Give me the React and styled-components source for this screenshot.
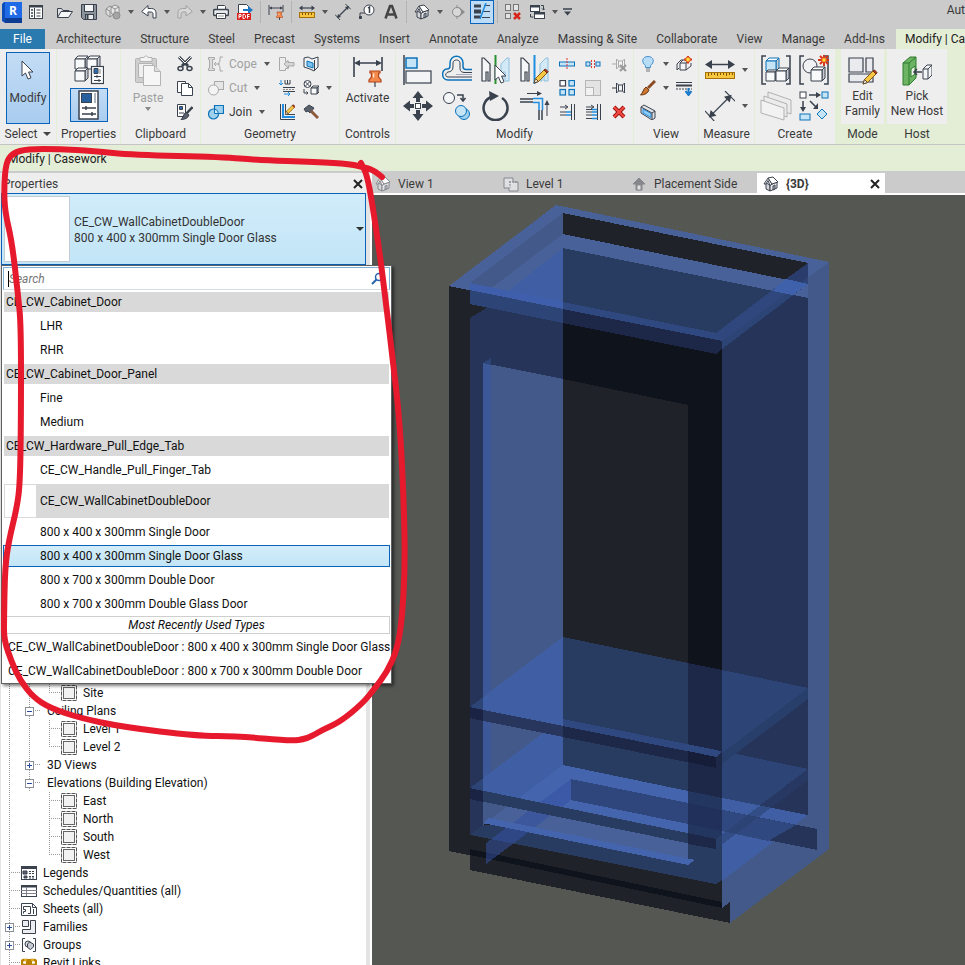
import React from 'react';
import styled, { createGlobalStyle } from 'styled-components';

const INK = '#3a424e';
const BLUE = '#0c73ba';
const SKY = '#c5e4f6';
const GREEN = '#e4eed6';
const GREY = '#cbcbcb';
const PANEL = '#eeeeee';
const SELECT = '#0a63b8';
const FAINT = '#a9a9a9';

const GlobalStyle = createGlobalStyle`
  *, *::before { box-sizing: border-box; }
  body { margin: 0; overflow: hidden; }
  body, button, input {
    font-family: Roboto, "Open Sans", sans-serif;
    font-size: 12px;
    line-height: 16px;
  }
  button {
    margin: 0;
    padding: 0;
    border: 0;
    background: none;
    color: inherit;
    text-align: left;
  }
  ul { margin: 0; padding: 0; list-style: none; }
  svg { display: block; flex: none; }
`;

/* ---------- icons ---------- */

const Icon = ({ w = 16, h = w, children }) => (
  <svg width={w} height={h} viewBox={`0 0 ${w} ${h}`} fill="none" stroke={INK} strokeWidth="1" aria-hidden="true">
    {children}
  </svg>
);

const Cube = ({ x, y, s, d = 3, fill = '#f8f9fb', line = INK }) => (
  <g stroke={line} strokeLinejoin="round">
    <path d={`M${x} ${y + d}l${d} ${-d}h${s}l${-d} ${d}z`} fill="#fff" />
    <path d={`M${x + s} ${y + d}l${d} ${-d}v${s}l${-d} ${d}z`} fill="#c9ccd2" />
    <rect x={x} y={y + d} width={s} height={s} fill={fill} />
  </g>
);

const Pencil = ({ x, y }) => (
  <g transform={`translate(${x} ${y})`} strokeLinejoin="round">
    <path d="M0 14l1.500-4.500L10 1l3 3L4.500 12.500z" fill="#f6c645" stroke="#8a5a10" />
    <path d="M10 1l1.500-1 2.500 2.500L13 4z" fill="#c0391b" stroke="#6b2a12" />
    <path d="M0 14l1.500-4.500 3 3z" fill="#f7e6cc" stroke="#5b4a35" />
  </g>
);

const Burst = ({ x, y, r = 4 }) => (
  <g transform={`translate(${x} ${y})`}>
    <path d={`M0 ${-r - 1}V${r + 1}M${-r - 1} 0H${r + 1}M${-r + 1} ${-r + 1}L${r - 1} ${r - 1}M${r - 1} ${-r + 1}L${-r + 1} ${r - 1}`} stroke="#d8341a" strokeWidth="2" />
    <circle r="2" fill="#ffe24a" stroke="#f08c1b" />
  </g>
);

const House = ({ line = INK }) => (
  <Icon>
    <g stroke={line} strokeLinejoin="round">
      <path d="M3 7v6l4 2V9z" fill="#d5d7db" />
      <path d="M7 9v6l7-3V6z" fill="#e4e6e9" />
      <path d="M1 8l4-6 4 6-2 1.500L5 4.500 3 8z" fill="#fff" />
      <path d="M5 2l5-1 5 5-6 2z" fill="#fff" />
      <path d="M10 10l2-1v4l-2 1z" fill="#b8bcc4" />
    </g>
  </Icon>
);

const HouseBlack = () => (
  <Icon>
    <path d="M8 2l6 6h-3v6H5V8H2z" fill="#85878c" stroke="#85878c" />
    <path d="M6 9h4v5H6z" fill="#e0e0e0" stroke="#8a8c90" />
  </Icon>
);

const LevelTab = () => (
  <Icon>
    <path d="M1 2h9v4h5v9H6v-3H1z" fill="#dfe0e2" stroke="#85878c" />
    <path d="M7 5v7M6 6h9" stroke="#85878c" strokeDasharray="2 1" />
  </Icon>
);

const Logo = () => (
  <Icon w={20} h={21}>
    <path d="M2 0h18v17H3z" fill="#1f6ae6" stroke="none" />
    <path d="M2 0L0 2v17l3 2V0z" fill="#0a4dbb" stroke="none" />
    <path d="M3 16h17v5H3z" fill="#0c3c94" stroke="none" />
    <text x="7" y="13" fill="#fff" stroke="none" fontSize="12" fontWeight="700" fontFamily="Open Sans, sans-serif">R</text>
  </Icon>
);

const HomePanel = () => (
  <Icon>
    <rect x="1.500" y="1.500" width="13" height="13" fill="#fff" />
    <path d="M1 2.500h14" strokeWidth="2" />
    <path d="M6.500 4v10" />
    <path d="M3 6h2M3 9h2M3 12h2" strokeWidth="1.500" />
    <path d="M8.500 6h4M8.500 9h4M8.500 12h4" />
  </Icon>
);

const Open = () => (
  <Icon>
    <path d="M.5 13V4.500h4l1.500 2h6v2" fill="#dfe1e5" />
    <path d="M.5 13.500l3.500-6h11.500l-4 6z" fill="#f6f7f9" />
  </Icon>
);

const Save = () => (
  <Icon>
    <path d="M.5.5h15v15H2.500l-2-2z" fill="#8c929b" />
    <rect x="3.500" y=".5" width="9" height="7" fill="#f4f5f7" />
    <rect x="4.500" y="10.500" width="8" height="5" fill="#e9ebed" />
    <path d="M6.500 11v4" strokeWidth="2" />
  </Icon>
);

const SyncGrey = () => (
  <Icon>
    <g stroke="#8e8e8e">
      <path d="M1 5l4-3 4 2v6l-4 3-4-3z" fill="#ddd" />
      <path d="M6 3l4-2 4 2v6l-4 3-4-3z" fill="#e6e6e6" />
      <path d="M6 3l4 2 4-2M10 5v7M1 5l4 2v6" />
      <circle cx="11.500" cy="11.500" r="3.500" fill="#a5a5a5" />
    </g>
  </Icon>
);

const Undo = ({ line = INK, fill = '#fff', flip }) => (
  <Icon>
    <path
      transform={flip ? 'matrix(-1 0 0 1 16 0)' : undefined}
      d="M.7 7.500L7 1.500v3h3.500c3 0 4.500 2 4.500 4.500v5h-3v-4c0-1.500-1-2-2-2H7v4z"
      fill={fill}
      stroke={line}
      strokeLinejoin="round"
    />
  </Icon>
);

const Print = () => (
  <Icon>
    <path d="M4.500 6V1.500h7l1 1V6" fill="#fff" />
    <rect x=".5" y="5.500" width="15" height="6" rx="1.500" fill="#e9ebee" strokeWidth="1.500" />
    <path d="M3.500 9.500h9v5h-9z" fill="#fff" />
    <path d="M5 12h6" stroke="#999" />
  </Icon>
);

const Pdf = () => (
  <Icon>
    <path d="M1.500 9V.5h8l3 3V9" fill="#fff" />
    <path d="M6 5h5V2l5 4-5 4V7H6z" fill="#1b76c4" stroke="none" />
    <rect y="9" width="14" height="7" fill="#d9201c" stroke="none" />
    <path d="M2 14.500v-4h2v2H2M6 10.500v4h1.500l1-1v-2l-1-1zM10.500 14.500v-4h2M10.500 12.500h2" stroke="#fff" />
  </Icon>
);

const PinDim = ({ big }) => (
  <Icon w={big ? 32 : 16} h={big ? 32 : 16}>
    <g transform={big ? 'scale(2)' : undefined}>
      <path d="M1 1v10M15 1v7M2 4h12" strokeWidth={big ? 0.8 : 1} />
      <path d="M1 4l3-1.500v3zM15 4l-3-1.500v3z" fill={INK} stroke="none" />
      <path d="M9 8h5v1h-.7v2l1.200 1.500v1h-6v-1L9.700 11V9H9z" fill="#f2884a" stroke="#b3431b" strokeWidth=".6" />
      <path d="M10.800 9.200v2" stroke="#ffe0cc" strokeWidth=".7" />
      <path d="M11.500 13.500V16" strokeWidth={big ? 0.6 : 1} />
    </g>
  </Icon>
);

const Ruler = ({ big }) => (big ? (
  <Icon w={30} h={20}>
    <path d="M3 4.500h24" strokeWidth="1.500" />
    <path d="M0 4.500L7 0v9zM30 4.500L23 0v9z" fill={INK} stroke="none" />
    <rect x=".5" y="12.500" width="29" height="6" fill="#f7c63e" stroke="#a3700a" />
    <path d="M3.500 13v3M6.500 13v2M9.500 13v2M12.500 13v3M15.500 13v2M18.500 13v2M21.500 13v3M24.500 13v2M27.500 13v2" stroke="#7d5507" />
  </Icon>
) : (
  <Icon>
    <path d="M1 4h14" strokeWidth="1.200" />
    <path d="M0 4l3.500-2.500v5zM16 4l-3.500-2.500v5z" fill={INK} stroke="none" />
    <rect x=".5" y="8.500" width="15" height="5" fill="#f7c63e" stroke="#a3700a" />
    <path d="M3.500 9v2M6.500 9v2M9.500 9v2M12.500 9v2" stroke="#7d5507" />
  </Icon>
));

const Aligned = ({ big }) => (
  <Icon w={big ? 30 : 16} h={big ? 30 : 16}>
    <g transform={big ? 'scale(1.900)' : undefined}>
      <path d="M2.500 13.500l11-11" strokeWidth={big ? 0.7 : 1.200} />
      <path d="M0 10.500L5 16M10.500 0L16 5.500" strokeWidth={big ? 0.6 : 1} />
      <path d="M2 14l1-4 3 3zM14 2l-1 4-3-3z" fill={INK} stroke="none" />
    </g>
  </Icon>
);

const Tag = () => (
  <Icon>
    <path d="M1 15V9h5" />
    <path d="M.5 12.500h2v2h-2z" fill={INK} />
    <circle cx="10" cy="6" r="5" fill="#fff" />
    <path d="M9 4l1.500-1v6" strokeWidth="1.500" />
  </Icon>
);

const LetterA = () => (
  <Icon>
    <path d="M2.500 14.500L7 2h2l4.500 12.500M5 10.500h6" stroke="#444" strokeWidth="2.500" />
  </Icon>
);

const Section = () => (
  <Icon>
    <circle cx="7" cy="8" r="4.500" fill="#d8d8d8" stroke="#8c8c8c" />
    <path d="M7 3l2 0 6 5-6 5H7c3-1 4-2 4-5s-1-4-4-5z" fill="#8c8c8c" stroke="none" />
    <path d="M7 1v2M7 13v2" stroke="#8c8c8c" />
  </Icon>
);

const ThinLines = () => (
  <Icon w={18}>
    <path d="M1 3h7M1 14h7" strokeWidth="3" />
    <path d="M1 8.500h7" strokeWidth="4" />
    <path d="M11 2.500h6M10 8.500h7M9 14.500h8" />
    <path d="M13 0L7 16" stroke="#1f8de0" strokeWidth="1.500" />
  </Icon>
);

const CloseWindows = () => (
  <Icon>
    <g stroke="#777">
      <rect x=".5" y=".5" width="5" height="6" fill="#e4e4e4" />
      <rect x="8.500" y=".5" width="5" height="6" fill="#e4e4e4" />
      <rect x=".5" y="9.500" width="5" height="5" fill="#e4e4e4" />
    </g>
    <path d="M9 9l6 6M15 9l-6 6" stroke="#d6261c" strokeWidth="2.500" />
  </Icon>
);

const SwitchWindows = () => (
  <Icon>
    <rect x="1.500" y="1.500" width="9" height="6" fill="#fff" />
    <path d="M1 2.500h10" strokeWidth="2" />
    <rect x="5.500" y="8.500" width="10" height="6" fill="#fff" />
    <path d="M5 9.500h11" strokeWidth="2" />
    <path d="M12 1.500h2.500V6M13 4.500L14.500 6 16 4.500M1.500 10v3h3" />
  </Icon>
);

const Customize = () => (
  <Icon w={9} h={8}>
    <path d="M0 1h9" strokeWidth="1.500" />
    <path d="M1 3.500h7L4.500 7.500z" fill={INK} stroke="none" />
  </Icon>
);

const Cursor = ({ x = 0, y = 0 }) => (
  <g transform={`translate(${x} ${y})`}>
    <path d="M1 1v15l3.500-3 2.500 6 3-1.200-2.500-5.800H12z" fill="#fff" stroke={INK} strokeLinejoin="round" />
  </g>
);

const ModifyArrow = () => (
  <Icon w={14} h={22}><Cursor /></Icon>
);

const TypeProps = () => (
  <Icon w={30} h={30}>
    <Cube x={1} y={1} s={10} />
    <Cube x={13} y={1} s={10} />
    <Cube x={1} y={13} s={10} />
    <rect x="17.500" y="11.500" width="12" height="17" fill="#fff" strokeWidth="1.200" />
    <path d="M20 13.500h4v5h-4z" fill="#2f6db0" />
    <path d="M26 14v5" stroke="#aaa" strokeWidth="1.500" />
    <path d="M20 21.500h7M20 25.500h7M23 20v3M25 24v3" />
  </Icon>
);

const PropsSheet = () => (
  <Icon w={22} h={30}>
    <rect x="1" y="1" width="19" height="28" fill="#fff" strokeWidth="1.500" />
    <rect x="3.500" y="3.500" width="10" height="9" fill="#285f9e" />
    <path d="M17 3v10" stroke="#aeb4bc" strokeWidth="2" />
    <path d="M4 18h14M4 24h14M8 16v4M14 22v4" strokeWidth="1.500" />
  </Icon>
);

const Paste = () => (
  <Icon w={28} h={32}>
    <g stroke="#b3b3b3">
      <rect x="1.500" y="3.500" width="21" height="24" rx="1" fill="#cfcfcf" />
      <path d="M6 2.500h4c0-2 4-2 4 0h4v4H6z" fill="#f3f3f3" />
      <path d="M4.500 8.500h14v14h-14z" fill="#efefef" />
      <path d="M9.500 10.500h11l6 6v14h-17z" fill="#f6f6f6" />
      <path d="M20.500 10.500v6h6" fill="#ddd" />
    </g>
  </Icon>
);

const CutScissors = () => (
  <Icon>
    <path d="M2 1l9 9M14 1L5 10" strokeWidth="3" />
    <path d="M2 1l6 6M14 1L8 7" stroke="#fff" />
    <ellipse cx="3.500" cy="12.500" rx="2.500" ry="2" strokeWidth="1.500" />
    <ellipse cx="12.500" cy="12.500" rx="2.500" ry="2" strokeWidth="1.500" />
  </Icon>
);

const Copy = () => (
  <Icon>
    <path d="M.5 1.500h8v11h-8z" fill="#fff" />
    <path d="M4.500 3.500h7l4 4v8h-11z" fill="#fff" />
    <path d="M11.500 3.500v4h4" />
  </Icon>
);

const MatchType = () => (
  <Icon>
    <path d="M.5.500h8v12h-8z" fill="#fff" />
    <path d="M2.500 2.500h3v3h-3z" fill="#2f6db0" />
    <path d="M2 9h5" />
    <path d="M15.500 3L9 10" strokeWidth="2.500" />
    <path d="M9 8l3 3c-1 3-4 4.500-8 4.500 2-1 2-5 5-7.500z" fill="#59606b" />
  </Icon>
);

const Cope = () => (
  <Icon>
    <g stroke={FAINT}>
      <path d="M.5 1.500h6v2h-2v9h2v2h-6v-2h1v-9h-1z" fill="#ddd" />
      <path d="M15 1h-3v4l-2 3 2 3v4h3M6 8h6M8 6L6 8l2 2" />
    </g>
  </Icon>
);

const CutGeo = () => (
  <Icon>
    <g stroke={FAINT} fill="#e6e6e6">
      <rect x="6.500" y="1.500" width="9" height="8" />
      <circle cx="5.500" cy="10" r="5" fill="#f4f4f4" />
    </g>
  </Icon>
);

const JoinGeo = () => (
  <Icon>
    <g stroke={BLUE}>
      <path d="M6.500 1.500h9v8h-5a5 5 0 1 1-5-4.500h1z" fill="#9fd0ee" strokeWidth="1.200" />
      <path d="M6.500 5a5 5 0 0 1 4 4.500h-4z" fill="#d4ecf9" />
    </g>
  </Icon>
);

const WallJoin = () => (
  <Icon>
    <g stroke={FAINT}>
      <path d="M.5 1.500h6v4h3v7h-3v2h-6z" fill="#ededed" />
      <path d="M5 8l4-3.500V6.500h6v3.500H9v2z" fill="#d6d6d6" />
    </g>
  </Icon>
);

const SplitFace = () => (
  <Icon>
    <path d="M1 2l4-1 4 2 6-2v10l-4 4-4-2-6-2z" fill="#f1f2f4" />
    <path d="M4 5l6 2v5l-6-2z" fill="#7bc0ee" stroke={BLUE} />
    <path d="M11.500 4v11" />
  </Icon>
);

const BeamJoin = () => (
  <Icon>
    <path d="M2 0v5M0 3l2 2 2-2M5 14h6M9 12l2 2-2 2" stroke="#1f8de0" />
    <path d="M6 0v4h5V0M8.500 0v4M4 7.500h12M4 11.500h12" />
    <path d="M4 9.500h12" stroke="#888" strokeDasharray="2 1" />
  </Icon>
);

const PaintBucket = () => (
  <Icon>
    <circle cx="4.500" cy="4" r="3.500" fill="#fff" />
    <path d="M2 1.500l5 5M7 1.500l-5 5M1 9v4h4M3.500 11.500L5 13l-1.500 1.500" />
    <Cube x={8} y={6} s={6} d={2} />
  </Icon>
);

const WallEdit = () => (
  <Icon>
    <path d="M1.500 0v15.500H16M6.500 0v10.500H16" />
    <path d="M4 0v13h12" stroke="#1f8de0" strokeWidth="2" />
    <g transform="scale(.7)"><Pencil x={9} y={1} /></g>
  </Icon>
);

const Hammer = () => (
  <Icon>
    <path d="M1 5l5-4 5 3-4 5-2-2-2 1z" fill="#59606b" />
    <path d="M8 7l7 7" stroke="#8e5a3c" strokeWidth="3" />
  </Icon>
);

const AlignIcon = () => (
  <Icon w={30} h={30}>
    <path d="M1 0v30" strokeWidth="1.500" />
    <rect x="3" y="3" width="11" height="10" fill={SKY} stroke={BLUE} strokeWidth="1.500" />
    <rect x="3" y="16" width="25" height="12" fill="#f3f4f6" strokeWidth="1.200" />
  </Icon>
);

const OffsetIcon = () => (
  <Icon w={30} h={30}>
    <path d="M30 14.500h-6c-2 0-3-1-3-3V8c0-9-13-9-13 0v3c0 2-1 3-3 3-6 0-6 11 1 11h24" stroke={BLUE} strokeWidth="1.500" />
    <path d="M30 17.500h-7c-3 0-5-1-5-4V8c0-4-7-4-7 0v4c0 3-2 5-5 5-3 1-3 5 0 5h24" />
    <path d="M30 19.500H14" stroke="#aab" />
  </Icon>
);

const Mirror = ({ pick }) => (
  <Icon w={30} h={30}>
    <path d="M1 3h2l6 6v17H7v-9H5v9H1z" fill="#f5f6f8" strokeWidth="1.200" />
    <path d="M28 3h-2l-6 6v17h2v-9h2v9h4z" fill="#d3e9f6" stroke="#8dc0de" />
    <path d="M14.500 0v29" stroke={pick ? '#2a9130' : '#1f8de0'} strokeWidth="2" />
    {pick ? <Cursor x={13} y={9} /> : <Pencil x={14} y={14} />}
  </Icon>
);

const Move = () => (
  <Icon w={30} h={30}>
    <path d="M15 0l5.500 7H17v4h-4V7H9.500zM15 30l5.500-7H17v-4h-4v4H9.500zM0 15l7-5.500V13h4v4H7v3.500zM30 15l-7-5.500V13h-4v4h4v3.500z" fill={INK} stroke="none" />
    <rect x="12.500" y="12.500" width="5" height="5" fill="#fff" />
  </Icon>
);

const CopyMod = () => (
  <Icon w={30} h={30}>
    <circle cx="7" cy="7" r="5.500" fill="#f5f6f8" />
    <circle cx="22" cy="23" r="5.500" fill="#9fd0ee" stroke={BLUE} />
    <circle cx="19" cy="20" r="5.500" fill={SKY} stroke={BLUE} />
    <path d="M15 4h6v5M18.500 7l2.500 3 2.500-3" strokeWidth="1.500" />
  </Icon>
);

const Rotate = () => (
  <Icon w={30} h={30}>
    <path d="M10 6a12 12 0 1 0 11 1" strokeWidth="2.500" />
    <path d="M8 0l10 5-9 5z" fill={INK} stroke="none" />
  </Icon>
);

const Trim = () => (
  <Icon w={30} h={30}>
    <path d="M0 8h13M0 11h13M22 19v10M19 19v10" strokeWidth="1.500" />
    <path d="M13 7.500h9.500V19M13 11.500h6V19" stroke="#1f8de0" strokeWidth="1.500" />
    <path d="M7 2.500h12M27 25V13" />
    <path d="M17 0l5 2.500-5 2.500zM24.500 14l2.500-5 2.500 5z" fill={INK} stroke="none" />
  </Icon>
);

const SplitEl = ({ gap }) => (
  <Icon>
    <g stroke={BLUE} fill={SKY}>
      {gap ? <><rect x="1" y="6" width="4" height="4" /><rect x="11" y="6" width="4" height="4" /></> : <rect x=".5" y="6" width="15" height="4" />}
    </g>
    <path d={gap ? 'M6.500 4v9M9.500 4v9' : 'M8 2v12'} stroke="#d33" strokeDasharray="2 1" />
  </Icon>
);

const ArrayIcon = () => (
  <Icon>
    <rect x="1" y=".5" width="5.500" height="5.500" fill="#fff" strokeWidth="1.200" />
    <g stroke={BLUE} fill={SKY} strokeWidth="1.200">
      <rect x="10" y=".5" width="5.500" height="5.500" />
      <rect x="1" y="9.500" width="5.500" height="5.500" />
      <rect x="10" y="9.500" width="5.500" height="5.500" />
    </g>
  </Icon>
);

const Scale = () => (
  <Icon>
    <g stroke="#b5b5b5" fill="#e3e3e3">
      <rect x=".5" y=".5" width="15" height="15" />
      <rect x=".5" y="7.500" width="8" height="8" fill="#f2f2f2" />
    </g>
  </Icon>
);

const TrimOne = ({ multi }) => (
  <Icon>
    <path d="M12.500 0v16M15.500 0v16M1 3h7M6 1l3 2-3 2" />
    <path d="M1 8h6M1 11h6" />
    <path d="M7 8h5M7 11h5" stroke="#1f8de0" strokeWidth="1.500" />
    {multi && <><path d="M1 14.500h6M1 5.500h6" /><path d="M7 14.500h5M7 5.500h5" stroke="#1f8de0" strokeWidth="1.500" /></>}
  </Icon>
);

const PinIcon = ({ off }) => (
  <Icon>
    <g stroke={off ? FAINT : INK} fill="#f3f3f3">
      <path d="M1 8h5" />
      <path d="M5.500 3v10l2-2h4l2 2V3l-2 2h-4zM7.500 5v6M11.500 5v6" />
    </g>
    {off && <path d="M9 9l6 6M15 9l-6 6" stroke="#999" strokeWidth="2" />}
  </Icon>
);

const Delete = () => (
  <Icon>
    <path d="M3 3l10 10M13 3L3 13" stroke="#a01610" strokeWidth="4" />
    <path d="M3 3l10 10M13 3L3 13" stroke="#f24a43" strokeWidth="2" />
  </Icon>
);

const Bulb = () => (
  <Icon>
    <path d="M8 .5c6 0 7 6 2.500 9v2h-5v-2C1 6.500 2 .5 8 .5z" fill="#b7dcf6" stroke="#4a90cc" />
    <path d="M6 13h4M6 15h4" stroke="#777" />
  </Icon>
);

const Override = () => (
  <Icon>
    <path d="M1 8l4-4h6M1 8v6l2-2M4 7h6v7H4zM4 7l3-3M10 7l3-2M10 14l5-4V7" fill="#f3f3f3" />
    <Burst x={12} y={3.5} r={3} />
  </Icon>
);

const Brush = () => (
  <Icon>
    <path d="M15 1L8 8" stroke="#8a4b22" strokeWidth="3" />
    <path d="M6 7l3 3c-1 3-4 5-8.500 5C3 13 3 9 6 7z" fill="#c9752f" stroke="#6f3c17" />
  </Icon>
);

const Linework = () => (
  <Icon>
    <path d="M0 2.500h16" />
    <path d="M0 5.500h16" strokeWidth="2" />
    <path d="M0 9h16" strokeDasharray="2 1" />
    <path d="M12.500 8v5M9.500 11l3 4 3-4" stroke="#1577c9" strokeWidth="2" />
  </Icon>
);

const SelectBox = () => (
  <Icon>
    <path d="M1 3l3-2 11 6v7l-3 2L1 9z" fill="#dfe3e8" />
    <path d="M3 5l8 4.500v4L3 9z" fill="#8fcbf3" stroke="#1f8de0" />
    <path d="M12 16V9L1 3M12 9l3-2" />
  </Icon>
);

const Brackets = ({ children }) => (
  <Icon w={30} h={30}>
    <path d="M5 1H1v28h4M25 1h4v28h-4" strokeWidth="1.500" />
    {children}
  </Icon>
);

const CreateGroup = () => (
  <Brackets>
    <Cube x={5} y={3} s={10} fill={SKY} line={BLUE} />
    <Cube x={5} y={15} s={9} d={2} />
    <Cube x={15} y={13} s={10} />
  </Brackets>
);

const CreateSimilar = () => (
  <Brackets>
    <circle cx="11" cy="11" r="7" fill="#f0f1f3" />
    <Cube x={12} y={12} s={11} />
    <Burst x={25} y={5} r={5} />
  </Brackets>
);

const Assembly = () => (
  <Icon w={32} h={30}>
    <g fill="#ececec" stroke="#b1b1b1" strokeLinejoin="round">
      <path d="M8 1l23 8v14L8 15z" />
      <path d="M4 5l23 8v13L4 19z" />
      <path d="M1 9l23 8v12L1 22z" fill="#f2f2f2" />
    </g>
  </Icon>
);

const Parts = () => (
  <Icon w={30} h={30}>
    <rect x="1" y="1" width="6" height="6" fill="#fff" />
    <path d="M10 4h9M4 10v9M11 10l7 7" strokeWidth="1.500" />
    <path d="M17 1l5 3-5 3zM1 16h6l-3 5zM14 18h5v-6z" fill={INK} stroke="none" />
    <g fill={SKY} stroke={BLUE}>
      <rect x="23" y="1" width="6" height="6" />
      <rect x="1" y="23" width="10" height="6" />
      <path d="M23 18l5 5-5 5-5-5z" />
    </g>
  </Icon>
);

const EditFamily = () => (
  <Icon w={30} h={30}>
    <path d="M1 2h14v14H1zM18 2h7v14h-7zM1 18h24v8H1z" fill="#e9ebee" strokeWidth="1.200" />
    <Pencil x={15} y={14} />
  </Icon>
);

const PickHost = () => (
  <Icon w={30} h={30}>
    <path d="M1 7l7-6h6v21l-7 7H1z" fill="#6cb463" stroke="#2f7d2f" />
    <path d="M1 7h6l7-6M7 7v22" stroke="#2f7d2f" />
    <path d="M9 13l4-3v8l-4 3z" fill="#eef4ea" stroke="#2f7d2f" />
    <path d="M12 16h8M15 13l-3 3 3 3" strokeWidth="1.500" />
    <path d="M21 13l4-4h5v10l-4 4h-5z" fill="#f3f4f6" />
    <path d="M21 13h5l4-4M26 13v10" />
  </Icon>
);

const Magnifier = () => (
  <Icon w={14}>
    <circle cx="9" cy="5" r="3.500" stroke="#2a63ae" strokeWidth="1.500" />
    <path d="M6.500 7.500L2 12" stroke="#2a63ae" strokeWidth="2" />
  </Icon>
);

const ViewMark = () => (
  <Icon>
    <rect x=".5" y=".5" width="15" height="15" stroke="#555" strokeDasharray="4 1" />
    <rect x="2.500" y="2.500" width="11" height="11" fill="#f2f2f2" stroke="#666" />
  </Icon>
);

const LegendMark = () => (
  <Icon>
    <rect x=".5" y="1.500" width="15" height="13" fill="#fff" />
    <path d="M0 2.500h16" strokeWidth="3" />
    <path d="M2 6h4v3H2zM3 11h3v2H3z" fill="#59606b" />
    <path d="M8 6.500h6M8 8.500h6M8 11.500h6M8 13h6" strokeDasharray="2 1" />
  </Icon>
);

const ScheduleMark = () => (
  <Icon>
    <rect x=".5" y="2.500" width="15" height="11" fill="#fff" />
    <path d="M0 3.500h16" strokeWidth="2" />
    <path d="M5.500 4v9M0 7.500h16M0 10.500h16" stroke="#7b828c" />
  </Icon>
);

const SheetMark = () => (
  <Icon>
    <path d="M.5 2.500h11l4 4v8H.5z" fill="#fff" />
    <path d="M11.500 2.500v4h4M2.500 12.500v-2h2v-2h-2v-3h7v7H7M12.500 8v5" />
  </Icon>
);

const FamilyMark = () => (
  <Icon>
    <path d="M1.500 1.500h6v6h-6z" fill="#eceef1" />
    <path d="M9.500 1.500h5v13h-13v-4h8z" fill="#eceef1" />
  </Icon>
);

const GroupMark = () => (
  <Icon>
    <path d="M4 1.500H1.500v13H4M12 1.500h2.500v13H12" />
    <circle cx="7" cy="7" r="3" fill="#d9dce0" />
    <path d="M6.500 7l2-2 4 2v3l-3 2.500-3-2z" fill="#c5cad2" />
  </Icon>
);

const LinkMark = () => (
  <Icon>
    <path d="M2 5h4c3 0 3 5 0 5H3c-3 0-3-5 0-5zM10 5h3c3 0 3 5 0 5h-3c-3 0-3-5 0-5zM5 7.500h6" stroke="#b98000" strokeWidth="2.500" />
    <path d="M3 5h3M10 5h3" stroke="#ffcf3a" />
  </Icon>
);

const Cross = () => (
  <Icon w={10}>
    <path d="M1 1l8 8M9 1L1 9" strokeWidth="2" stroke="#222" />
  </Icon>
);

const Caret = ({ color = '#555', w = 6 }) => (
  <Icon w={w} h={4}><path d={`M0 0h${w}L${w / 2} 4z`} fill={color} stroke="none" /></Icon>
);

/* ---------- window shell ---------- */

const Window = styled.div`
  display: flex;
  flex-direction: column;
  position: relative;
  height: 100vh;
  overflow: hidden;
  background: ${PANEL};
  color: #3a3a3a;
`;

const QuickAccess = styled.header`
  display: flex;
  align-items: flex-start;
  height: 29px;
  flex: none;
  background: ${GREY};
`;

const QuickButton = styled.button`
  display: flex;
  align-items: center;
  justify-content: center;
  width: 24px;
  height: 24px;
  flex: none;
  margin-right: ${p => (p.$gap ? 5 : 0)}px;
  border: ${p => (p.$on ? `1px solid ${SELECT}` : 0)};
  background: ${p => (p.$on ? '#bcdcf7' : 'none')};
`;

const Drop = styled.button`
  display: flex;
  align-items: center;
  justify-content: center;
  width: 12px;
  height: 24px;
  flex: none;
`;

const Divider = styled.span`
  width: 1px;
  height: 22px;
  margin: 1px 3px;
  background: #b3b3b3;
`;

const Title = styled.span`
  margin-left: auto;
  padding-top: 2px;
  white-space: nowrap;
`;

const Tabs = styled.nav`
  display: flex;
  height: 20px;
  flex: none;
  background: ${GREY};
`;

const TabGroup = styled.div`
  display: flex;
  flex: 1;
  justify-content: space-between;
  padding: 0 11px;
`;

const Tab = styled.button`
  white-space: nowrap;
`;

const FileTab = styled.button`
  width: 45px;
  background: #2a7ab0;
  color: #fff;
  text-align: center;
`;

const ContextTab = styled.button`
  width: 69px;
  padding-left: 9px;
  background: ${GREEN};
  color: #222;
  white-space: nowrap;
`;

const Ribbon = styled.div`
  display: flex;
  height: 95px;
  flex: none;
  background: ${GREEN};
`;

const Panel = styled.section`
  display: flex;
  flex-direction: column;
  width: ${p => p.$w}px;
  flex: none;
  margin-left: ${p => p.$gap || 0}px;
  border-right: 1px solid ${GREEN};
  background: ${PANEL};
`;

const PanelBody = styled.div`
  display: flex;
  justify-content: ${p => (p.$center ? 'center' : 'flex-start')};
  height: 75px;
  padding: 3px 2px 0;
`;

const PanelLabel = styled.div`
  display: flex;
  align-items: center;
  justify-content: center;
  gap: 6px;
  height: 20px;
  background: ${p => (p.$green ? GREEN : 'none')};
`;

const BigButton = styled.button`
  display: flex;
  flex-direction: column;
  align-items: center;
  width: ${p => p.$w}px;
  height: 72px;
  color: ${p => (p.$off ? '#a0a0a0' : 'inherit')};
  border: 1px solid ${p => (p.$on ? SELECT : 'transparent')};
  background: ${p => (p.$on ? 'linear-gradient(#c3dcf5, #a9cdf0)' : 'none')};
`;

const BigIcon = styled.span`
  display: flex;
  align-items: center;
  height: 36px;
  flex: none;
`;

const BigText = styled.span`
  line-height: ${p => (p.$two ? 15 : 18)}px;
  text-align: center;
  white-space: nowrap;
`;

const BigGrid = styled.div`
  display: grid;
  grid-template-columns: repeat(${p => p.$cols}, ${p => p.$size}px);
  grid-template-rows: 36px 36px;
`;

const SmallGrid = styled.div`
  display: grid;
  grid-template-columns: repeat(${p => p.$cols}, ${p => p.$size || 24}px);
  grid-template-rows: repeat(3, 24px);
`;

const Cell = styled.button`
  display: flex;
  align-items: center;
  justify-content: center;
`;

const Framed = styled(Cell)`
  width: 38px;
  height: 34px;
  justify-self: center;
  border: 1px solid ${SELECT};
  background: linear-gradient(#c3dcf5, #a9cdf0);
`;

const TextButtons = styled.div`
  display: grid;
  grid-template-rows: repeat(3, 24px);
  width: 72px;
`;

const TextButton = styled.button`
  display: flex;
  align-items: center;
  gap: 5px;
  padding-left: 5px;
  color: ${p => (p.$off ? '#a0a0a0' : 'inherit')};
  svg:last-child { margin-left: 2px; }
`;

const DropColumn = styled.div`
  display: grid;
  grid-auto-rows: ${p => p.$row}px;
  align-content: start;
  width: 12px;
`;

const OptionsBar = styled.div`
  height: 27px;
  flex: none;
  padding: 6px 8px 0;
  border-top: 1px solid #c4c4c4;
  background: ${GREEN};
  color: #222;
`;

const Workspace = styled.main`
  display: flex;
  flex: 1;
  min-height: 0;
`;

/* ---------- left dock ---------- */

const Dock = styled.aside`
  display: flex;
  flex-direction: column;
  width: 372px;
  flex: none;
  border-top: 2px solid ${GREY};
  border-right: 2px solid #fff;
  padding: 0 4px 0 1px;
  background: #e4e4e4;
`;

const DockTitle = styled.div`
  display: flex;
  align-items: center;
  justify-content: space-between;
  height: 20px;
  flex: none;
  padding: 1px 3px 0 2px;
  background: ${PANEL};
`;

const TypeSelector = styled.div`
  position: relative;
  flex: none;
  color: #333;
`;

const TypeButton = styled.button`
  display: flex;
  align-items: center;
  width: 100%;
  height: 72px;
  padding: 0 1px 0 2px;
  border: 1px solid ${SELECT};
  background: linear-gradient(#d1ecfa, #c2e5f7);
`;

const Thumb = styled.span`
  width: 66px;
  height: 66px;
  border: 1px solid #c4ccd2;
  background: #fff;
`;

const TypeName = styled.span`
  flex: 1;
  padding: 2px 0 0 4px;
`;

const Popup = styled.div`
  position: absolute;
  top: 100%;
  left: 0;
  z-index: 2;
  width: 391px;
  padding: 1px;
  border: 1px solid #5d5f61;
  background: #fff;
  color: #111;
  box-shadow: 2px 2px 3px rgba(0, 0, 0, 0.5);
`;

const SearchBox = styled.div`
  display: flex;
  align-items: center;
  justify-content: space-between;
  height: 23px;
  margin-bottom: 2px;
  padding: 0 5px 0 4px;
  border: 1px solid #7fb0d6;
  border-bottom-color: #d5dde3;
`;

const SearchInput = styled.input`
  flex: 1;
  height: 16px;
  padding: 0;
  border: 0;
  border-left: 1px solid #000;
  outline: none;
  font-style: italic;
  &::placeholder { color: #777; opacity: 1; }
`;

const FamilyRow = styled.li`
  height: 20px;
  margin: 2px 1px;
  padding: 2px 2px;
  background: #d9d9d9;
`;

const BigFamilyRow = styled.li`
  display: flex;
  align-items: center;
  height: 34px;
  margin: 2px 1px;
  background: #d9d9d9;
  &::before {
    content: '';
    width: 33px;
    height: 34px;
    margin-right: 3px;
    border: 1px solid #d9d9d9;
    background: #fff;
  }
`;

const TypeRow = styled.button`
  display: block;
  width: 100%;
  height: ${p => (p.$on ? 22 : 24)}px;
  margin: ${p => (p.$on ? '1px 0' : 0)};
  padding: 0 0 0 ${p => (p.$on ? 36 : 37)}px;
  border: ${p => (p.$on ? `1px solid ${SELECT}` : 0)};
  background: ${p => (p.$on ? 'linear-gradient(#d3edfa, #c3e5f6)' : 'none')};
`;

const RecentTitle = styled.div`
  height: 18px;
  border: 1px solid #cfcfcf;
  font-style: italic;
  text-align: center;
`;

const RecentRow = styled.button`
  display: block;
  width: 100%;
  height: 24px;
  padding: 2px 0 0 5px;
  white-space: nowrap;
`;

const PropertyArea = styled.div`
  height: 419px;
  flex: none;
  background: #fff;
`;

const Tree = styled.ul`
  flex: 1;
  min-height: 0;
  overflow: hidden;
  background: #fff;
  color: #111;
`;

const TreeRow = styled.li`
  display: flex;
  align-items: center;
  height: 18px;
  white-space: nowrap;
`;

const dots = {
  line: 'linear-gradient(#999 50%, transparent 50%) 0 0 / 1px 2px repeat-y',
  across: 'linear-gradient(90deg, #999 50%, transparent 50%) 0 8px / 2px 1px repeat-x',
};

const Guide = styled.span`
  display: flex;
  align-items: center;
  width: 20px;
  height: 18px;
  flex: none;
  padding: 0 0 ${p => (p.$kind === 'end' ? 9 : 0)}px 8px;
  background: ${p => ({
    none: 'none',
    line: dots.line,
    tee: `${dots.line}, ${dots.across}`,
    end: `${dots.line}, ${dots.across}`,
  }[p.$kind])};
  background-origin: content-box;
  background-clip: content-box;
`;

const Expander = styled.button`
  width: 9px;
  height: 9px;
  flex: none;
  margin-left: -4px;
  border: 1px solid #8a8f98;
  background:
    linear-gradient(#2a4a9a, #2a4a9a) center / 5px 1px no-repeat,
    linear-gradient(#2a4a9a, #2a4a9a) center / ${p => (p.$open ? 0 : 1)}px 5px no-repeat,
    #fff;
`;

const TreeText = styled.span`
  padding-left: 6px;
`;

/* ---------- drawing area ---------- */

const Views = styled.section`
  display: flex;
  flex-direction: column;
  flex: 1;
  min-width: 0;
`;

const ViewTabs = styled.div`
  display: flex;
  height: 24px;
  flex: none;
  padding: 2px 0 0 1px;
  border-bottom: 2px solid #fff;
  background: ${GREY};
`;

const ViewTab = styled.button`
  display: flex;
  align-items: center;
  gap: 7px;
  width: 128px;
  padding: 1px 5px 0 ${p => (p.$on ? 6 : 2)}px;
  background: ${p => (p.$on ? '#fff' : 'none')};
  font-weight: ${p => (p.$on ? 700 : 400)};
  svg:last-child:not(:first-child) { margin-left: auto; }
`;

const Canvas = styled.div`
  flex: 1;
  min-height: 0;
  padding: 10px 0 0 77px;
  background: #555753;
`;

const Markup = styled.svg`
  position: absolute;
  top: 140px;
  left: 0;
  z-index: 3;
  pointer-events: none;
`;

/* each face: corner points, fill */
const shelf = f => [
  [`470,${f} 563,${f - 70} 563,${f + 19}`, '#2d4477'],
  [`483,${f - 10} 563,${f - 70} 563,${f + 19} 483,${f + 3}`, '#3f5ea3'],
  [`563,${f - 70} 688,${f - 44} 688,${f + 44} 563,${f + 19}`, '#283c62'],
  [`688,${f - 44} 722,${f - 37} 722,${f + 46} 716,${f + 50} 688,${f + 44}`, '#1d2848'],
  [`722,${f - 37} 808,${f - 19} 722,${f + 46}`, '#2d4477'],
];

const shelfEdge = f => [
  [`470,${f} 483,${f + 3} 483,${f + 14} 470,${f + 11}`, '#1a2343'],
  [`483,${f + 3} 563,${f + 19} 563,${f + 30} 483,${f + 14}`, '#28365d'],
  [`563,${f + 19} 716,${f + 50} 716,${f + 61} 563,${f + 30}`, '#1d2848'],
  [`688,${f + 44} 716,${f + 50} 716,${f + 61} 688,${f + 55}`, '#151d38'],
  [`716,${f + 50} 722,${f + 46} 722,${f + 57} 716,${f + 61}`, '#1d2848'],
  [`722,${f + 46} 808,${f - 19} 808,${f - 8} 722,${f + 57}`, '#283e6b'],
];

const faces = [
  // outer shell
  ['449,286 722,341 722,908 449,851', '#1f2229'],
  ['470,849 730,902 730,923 470,870', '#1f2229'],
  ['470,849 722,902 722,908 470,855', '#0f131b'],
  ['722,341 829,262 829,849 730,923 730,902 722,908', '#43598a'],
  ['449,286 556,205 829,262 722,341', '#486198'],
  // walls behind the door
  ['470,318 504,297 563,309 563,765 470,835', '#27345a'],
  ['563,309 722,341 722,798 563,765', '#0f131b'],
  ['722,341 808,284 808,815 722,881', '#27345a'],
  // top panel
  ['563,213 808,263 808,284 563,234', '#1f2229'],
  ['470,283 563,213 563,234 470,304', '#43598a'],
  ['502,296 563,248 563,309', '#3f5ea3'],
  ['563,248 808,298 722,341 563,309', '#283c62'],
  ['722,341 808,284 808,360 722,420', '#27345a'],
  ['563,234 808,284 808,298 563,248', '#486198'],
  ['470,290 563,309 563,323 470,304', '#2d4477'],
  ['563,309 722,341 716,354 563,323', '#1d2848'],
  ['470,283 563,302 563,309 470,290', '#3f5eab'],
  ['563,302 716,333 722,341 563,309', '#304880'],
  ['716,333 808,263 808,284 722,349 722,341', '#2f477d'],
  ['786,279 808,263 808,284', '#2a3c6b'],
  ['722,341 808,277 808,284 722,349', '#2d4477'],
  ['772,291 786,279 808,284 793,295', '#3f60ab'],
  ['716,354 722,341 722,349', '#1d2848'],
  // glass
  ['483,363 563,379 563,765 483,825', '#43598a'],
  ['483,363 491,365 491,819 483,825', '#3c5899'],
  ['483,363 491,358 491,365', '#2d4477'],
  ['563,379 688,405 688,791 563,765', '#1f2229'],
  // shelves
  ...shelf(707),
  ...shelf(788),
  ['563,719 716,750 722,752 716,757 563,726', '#304880'],
  ['722,752 736,754 722,752', '#304880'],
  ...shelfEdge(707),
  // floor
  ['470,835 483,825 688,833 716,839 722,835 722,880 716,884', '#283c62'],
  ['483,825 563,765 688,791 688,865 483,823', '#486198'],
  ['519,798 563,765 688,791 688,833', '#4464ad'],
  ['688,791 722,798 722,835 716,839 688,833', '#233660'],
  ['470,835 483,825 519,798 483,791 470,788', '#27345a'],
  ['470,788 483,791 519,798 483,825 470,835', '#27345a'],
  ['483,791 519,798 483,825', '#43598a'],
  ['722,798 808,815 722,881', '#3f5ea3'],
  ['571,779 688,803 688,824 571,800', '#2f467c'],
  ['688,803 722,810 722,831 688,824', '#20305a'],
  ['722,810 817,829 817,850 722,831', '#27345a'],
  ['722,810 796,825 768,841 722,831', '#304880'],
  ['486,843 571,779 571,800 486,864', 'rgba(52,80,160,.55)'],
  ['470,788 716,839 716,849 470,799', '#283c62'],
  ['470,788 483,791 483,802 470,799', '#1a2343'],
  ['688,833 716,839 716,849 688,844', '#1d2848'],
  ['716,839 808,769 808,780 716,849', 'rgba(40,62,107,.5)'],
  ['483,823 489,818 695,860 688,865', '#4464ad'],
];

const Cabinet = () => (
  <svg width="381" height="719" viewBox="449 205 381 719" shapeRendering="crispEdges" role="img" aria-label="Wall cabinet">
    {faces.map(([points, fill], i) => <polygon key={i} points={points} fill={fill} />)}
  </svg>
);

const loop = [
  [382, 177], [375, 171], [367, 168], [350, 164], [317, 162], [257, 160], [223, 157], [133, 155],
  [93, 151], [60, 149], [27, 149], [13, 153], [6, 162], [4, 188], [5, 212], [12, 242], [18, 295],
  [21, 325], [21, 420], [20, 483], [17, 507], [9, 540], [5, 567], [4, 620], [4, 640], [12, 663],
  [20, 680], [33, 697], [50, 708], [80, 718], [123, 727], [197, 736], [237, 736], [290, 741],
  [307, 739], [322, 730], [340, 722], [363, 703], [375, 688], [387, 672], [397, 650], [402, 620],
  [405, 567], [404, 507], [400, 423], [392, 353], [387, 312], [380, 255], [372, 202], [367, 175], [361, 163],
];

// midpoint quadratics keep the pen stroke round
const penPath = points => {
  let d = `M${points[0]}`;
  for (let i = 1; i < points.length - 1; i += 1) {
    const [x, y] = points[i];
    const [nx, ny] = points[i + 1];
    d += `Q${x} ${y} ${(x + nx) / 2} ${(y + ny) / 2}`;
  }
  return `${d}L${points[points.length - 1]}`;
};

/* ---------- data ---------- */

const menuTabs = ['Architecture', 'Structure', 'Steel', 'Precast', 'Systems', 'Insert', 'Annotate', 'Analyze', 'Massing & Site', 'Collaborate', 'View', 'Manage', 'Add-Ins'];

const quickItems = [
  ['Revit', <Logo />], ['Home', <HomePanel />, 'gap'], ['Open', <Open />], ['Save', <Save />], ['Sync', <SyncGrey />], 'drop',
  ['Undo', <Undo />], 'drop', ['Redo', <Undo flip line="#a0a0a0" fill="#d8d8d8" />], 'drop',
  ['Print', <Print />], ['Export PDF', <Pdf />], 'bar', ['Controls', <PinDim />], 'bar',
  ['Measure', <Ruler />], 'drop', ['Aligned dimension', <Aligned />], ['Tag', <Tag />], ['Text', <LetterA />], 'bar',
  ['3D view', <House />], 'drop', ['Section', <Section />], ['Thin lines', <ThinLines />, 'on'], 'bar',
  ['Close windows', <CloseWindows />], ['Switch windows', <SwitchWindows />], 'drop',
];

const typeList = [
  ['family', 'CE_CW_Cabinet_Door'], ['type', 'LHR'], ['type', 'RHR'],
  ['family', 'CE_CW_Cabinet_Door_Panel'], ['type', 'Fine'], ['type', 'Medium'],
  ['family', 'CE_CW_Hardware_Pull_Edge_Tab'], ['type', 'CE_CW_Handle_Pull_Finger_Tab'],
  ['big', 'CE_CW_WallCabinetDoubleDoor'],
  ['type', '800 x 400 x 300mm Single Door'], ['on', '800 x 400 x 300mm Single Door Glass'],
  ['type', '800 x 700 x 300mm Double Door'], ['type', '800 x 700 x 300mm Double Glass Door'],
];

const treeRows = [
  { g: ['line', 'line', 'end'], icon: <ViewMark />, text: 'Site' },
  { g: ['line', 'tee'], open: true, text: 'Ceiling Plans' },
  { g: ['line', 'line', 'tee'], icon: <ViewMark />, text: 'Level 1' },
  { g: ['line', 'line', 'end'], icon: <ViewMark />, text: 'Level 2' },
  { g: ['line', 'tee'], open: false, text: '3D Views' },
  { g: ['line', 'tee'], open: true, text: 'Elevations (Building Elevation)' },
  { g: ['line', 'none', 'tee'], icon: <ViewMark />, text: 'East' },
  { g: ['line', 'none', 'tee'], icon: <ViewMark />, text: 'North' },
  { g: ['line', 'none', 'tee'], icon: <ViewMark />, text: 'South' },
  { g: ['line', 'none', 'end'], icon: <ViewMark />, text: 'West' },
  { g: ['tee'], icon: <LegendMark />, text: 'Legends' },
  { g: ['tee'], icon: <ScheduleMark />, text: 'Schedules/Quantities (all)' },
  { g: ['tee'], icon: <SheetMark />, text: 'Sheets (all)' },
  { g: ['tee'], open: false, icon: <FamilyMark />, text: 'Families' },
  { g: ['tee'], open: false, icon: <GroupMark />, text: 'Groups' },
  { g: ['tee'], icon: <LinkMark />, text: 'Revit Links' },
];

const Big = ({ icon, children, two, ...rest }) => (
  <BigButton {...rest}>
    <BigIcon>{icon}</BigIcon>
    <BigText $two={two}>{children}</BigText>
  </BigButton>
);

const cells = items => items.map(([label, icon]) => <Cell key={label} aria-label={label}>{icon}</Cell>);

const RibbonBar = () => (
  <Ribbon>
    <Panel $w={57}>
      <PanelBody $center><Big $w={44} $on icon={<ModifyArrow />}>Modify</Big></PanelBody>
      <PanelLabel>Select <Caret color="#444" w={8} /></PanelLabel>
    </Panel>
    <Panel $w={64}>
      <PanelBody $center>
        <BigGrid $cols={1} $size={40}>
          <Cell aria-label="Type properties"><TypeProps /></Cell>
          <Framed aria-label="Properties"><PropsSheet /></Framed>
        </BigGrid>
      </PanelBody>
      <PanelLabel>Properties</PanelLabel>
    </Panel>
    <Panel $w={80}>
      <PanelBody>
        <BigButton $w={50} $off>
          <BigIcon><Paste /></BigIcon>
          <BigText>Paste</BigText>
          <Caret color="#888" />
        </BigButton>
        <SmallGrid $cols={1}>{cells([['Cut to clipboard', <CutScissors />], ['Copy to clipboard', <Copy />], ['Match type', <MatchType />]])}</SmallGrid>
      </PanelBody>
      <PanelLabel>Clipboard</PanelLabel>
    </Panel>
    <Panel $w={139}>
      <PanelBody>
        <TextButtons>
          <TextButton $off><Cope />Cope<Caret /></TextButton>
          <TextButton $off><CutGeo />Cut<Caret /></TextButton>
          <TextButton><JoinGeo />Join<Caret /></TextButton>
        </TextButtons>
        <SmallGrid $cols={2}>
          {cells([['Wall joins', <WallJoin />], ['Split face', <SplitFace />], ['Beam joins', <BeamJoin />], ['Paint', <PaintBucket />], ['Edit wall', <WallEdit />], ['Demolish', <Hammer />]])}
        </SmallGrid>
        <DropColumn $row={72}><Cell aria-label="Paint options"><Caret /></Cell></DropColumn>
      </PanelBody>
      <PanelLabel>Geometry</PanelLabel>
    </Panel>
    <Panel $w={56}>
      <PanelBody $center><Big $w={52} icon={<PinDim big />}>Activate</Big></PanelBody>
      <PanelLabel>Controls</PanelLabel>
    </Panel>
    <Panel $w={238}>
      <PanelBody>
        <BigGrid $cols={4} $size={39}>
          {cells([['Align', <AlignIcon />], ['Offset', <OffsetIcon />], ['Mirror pick axis', <Mirror pick />], ['Mirror draw axis', <Mirror />], ['Move', <Move />], ['Copy', <CopyMod />], ['Rotate', <Rotate />], ['Trim corner', <Trim />]])}
        </BigGrid>
        <SmallGrid $cols={3} $size={26}>
          {cells([['Split', <SplitEl />], ['Split with gap', <SplitEl gap />], ['Unpin', <PinIcon off />], ['Array', <ArrayIcon />], ['Scale', <Scale />], ['Pin', <PinIcon />], ['Trim one', <TrimOne />], ['Trim many', <TrimOne multi />], ['Delete', <Delete />]])}
        </SmallGrid>
      </PanelBody>
      <PanelLabel>Modify</PanelLabel>
    </Panel>
    <Panel $w={65}>
      <PanelBody>
        <SmallGrid $cols={1}>{cells([['Hide', <Bulb />], ['Override', <Brush />], ['Selection box', <SelectBox />]])}</SmallGrid>
        <DropColumn $row={24}>
          <Cell aria-label="Hide options"><Caret /></Cell>
          <Cell aria-label="Override options"><Caret /></Cell>
        </DropColumn>
        <SmallGrid $cols={1}>{cells([['Displace', <Override />], ['Linework', <Linework />]])}</SmallGrid>
      </PanelBody>
      <PanelLabel>View</PanelLabel>
    </Panel>
    <Panel $w={56}>
      <PanelBody>
        <BigGrid $cols={1} $size={38}>{cells([['Measure', <Ruler big />], ['Dimension', <Aligned big />]])}</BigGrid>
        <DropColumn $row={36}>
          <Cell aria-label="Measure options"><Caret /></Cell>
          <Cell aria-label="Dimension options"><Caret /></Cell>
        </DropColumn>
      </PanelBody>
      <PanelLabel>Measure</PanelLabel>
    </Panel>
    <Panel $w={81}>
      <PanelBody $center>
        <BigGrid $cols={2} $size={38}>
          {cells([['Create group', <CreateGroup />], ['Create similar', <CreateSimilar />], ['Create assembly', <Assembly />], ['Create parts', <Parts />]])}
        </BigGrid>
      </PanelBody>
      <PanelLabel>Create</PanelLabel>
    </Panel>
    <Panel $w={44} $gap={5}>
      <PanelBody $center><Big $w={42} two icon={<EditFamily />}>Edit<br />Family</Big></PanelBody>
      <PanelLabel $green>Mode</PanelLabel>
    </Panel>
    <Panel $w={61} $gap={2}>
      <PanelBody $center><Big $w={60} two icon={<PickHost />}>Pick<br />New Host</Big></PanelBody>
      <PanelLabel $green>Host</PanelLabel>
    </Panel>
  </Ribbon>
);

const TypePopup = () => (
  <Popup>
    <SearchBox>
      <SearchInput placeholder="Search" aria-label="Search" />
      <Magnifier />
    </SearchBox>
    <ul>
      {typeList.map(([kind, name]) => {
        if (kind === 'family') return <FamilyRow key={name}>{name}</FamilyRow>;
        if (kind === 'big') return <BigFamilyRow key={name}>{name}</BigFamilyRow>;
        return <li key={name}><TypeRow $on={kind === 'on'}>{name}</TypeRow></li>;
      })}
    </ul>
    <RecentTitle>Most Recently Used Types</RecentTitle>
    <RecentRow>CE_CW_WallCabinetDoubleDoor : 800 x 400 x 300mm Single Door Glass</RecentRow>
    <RecentRow>CE_CW_WallCabinetDoubleDoor : 800 x 700 x 300mm Double Door</RecentRow>
  </Popup>
);

export default function App() {
  return (
    <Window>
      <GlobalStyle />
      <QuickAccess>
        {quickItems.map((item, i) => {
          if (item === 'bar') return <Divider key={i} />;
          if (item === 'drop') return <Drop key={i} aria-label="More"><Caret /></Drop>;
          const [label, icon, flag] = item;
          return <QuickButton key={i} aria-label={label} $gap={flag === 'gap'} $on={flag === 'on'}>{icon}</QuickButton>;
        })}
        <Drop aria-label="Customize"><Customize /></Drop>
        <Title>Aut</Title>
      </QuickAccess>
      <Tabs>
        <FileTab>File</FileTab>
        <TabGroup>{menuTabs.map(name => <Tab key={name}>{name}</Tab>)}</TabGroup>
        <ContextTab>Modify | Ca</ContextTab>
      </Tabs>
      <RibbonBar />
      <OptionsBar>Modify | Casework</OptionsBar>
      <Workspace>
        <Dock>
          <DockTitle>Properties<button aria-label="Close properties"><Cross /></button></DockTitle>
          <TypeSelector>
            <TypeButton>
              <Thumb />
              <TypeName>CE_CW_WallCabinetDoubleDoor<br />800 x 400 x 300mm Single Door Glass</TypeName>
              <Caret color="#333" w={8} />
            </TypeButton>
            <TypePopup />
          </TypeSelector>
          <PropertyArea />
          <Tree>
            {treeRows.map(row => (
              <TreeRow key={row.text}>
                {row.g.map((kind, i) => (
                  <Guide key={i} $kind={kind}>
                    {i === row.g.length - 1 && row.open !== undefined && <Expander $open={row.open} aria-label={`Toggle ${row.text}`} />}
                  </Guide>
                ))}
                {row.icon}
                <TreeText>{row.text}</TreeText>
              </TreeRow>
            ))}
          </Tree>
        </Dock>
        <Views>
          <ViewTabs>
            <ViewTab><House line="#85878c" />View 1</ViewTab>
            <ViewTab><LevelTab />Level 1</ViewTab>
            <ViewTab><HouseBlack />Placement Side</ViewTab>
            <ViewTab $on><House />{'{3D}'}<Cross /></ViewTab>
          </ViewTabs>
          <Canvas><Cabinet /></Canvas>
        </Views>
      </Workspace>
      <Markup width="420" height="610" viewBox="0 140 420 610">
        <path d={penPath(loop)} fill="none" stroke="#e6192d" strokeWidth="6" strokeLinecap="round" strokeLinejoin="round" />
      </Markup>
    </Window>
  );
}
